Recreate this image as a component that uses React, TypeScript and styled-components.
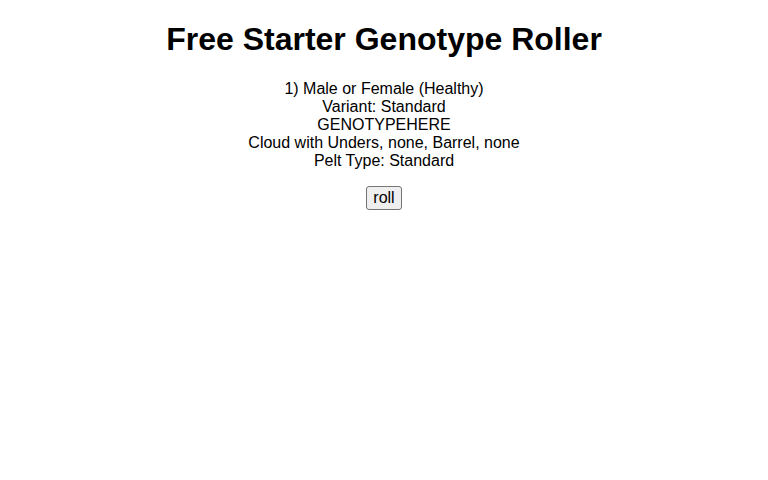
import React from "react";
import styled, { createGlobalStyle } from "styled-components";

const GlobalStyle = createGlobalStyle`
  body {
    margin: 8px;
    background: #ffffff;
    color: #000000;
    font-family: "Liberation Sans", Arial, sans-serif;
    font-size: 16px;
  }
`;

const Page = styled.main`
  text-align: center;
`;

const Title = styled.h1`
  font-size: 32px;
  font-weight: bold;
  margin: 13.44px 0 21.44px;
`;

const Result = styled.div`
  line-height: normal;
`;

const Line = styled.div``;

const Actions = styled.p`
  margin: 16px 0;
`;

const RollButton = styled.button`
  font-family: "Liberation Sans", Arial, sans-serif;
  font-size: 16px;
  color: #000000;
  background: #efefef;
  border: 1px solid #767676;
  border-radius: 3px;
  padding: 2px 6px;
  cursor: pointer;
`;

const lines = [
  "1) Male or Female (Healthy)",
  "Variant: Standard",
  "GENOTYPEHERE",
  "Cloud with Unders, none, Barrel, none",
  "Pelt Type: Standard",
];

export default function App() {
  return (
    <>
      <GlobalStyle />
      <Page>
        <Title>Free Starter Genotype Roller</Title>
        <Result>
          {lines.map((l) => (
            <Line key={l}>{l}</Line>
          ))}
        </Result>
        <Actions>
          <RollButton type="button">roll</RollButton>
        </Actions>
      </Page>
    </>
  );
}
